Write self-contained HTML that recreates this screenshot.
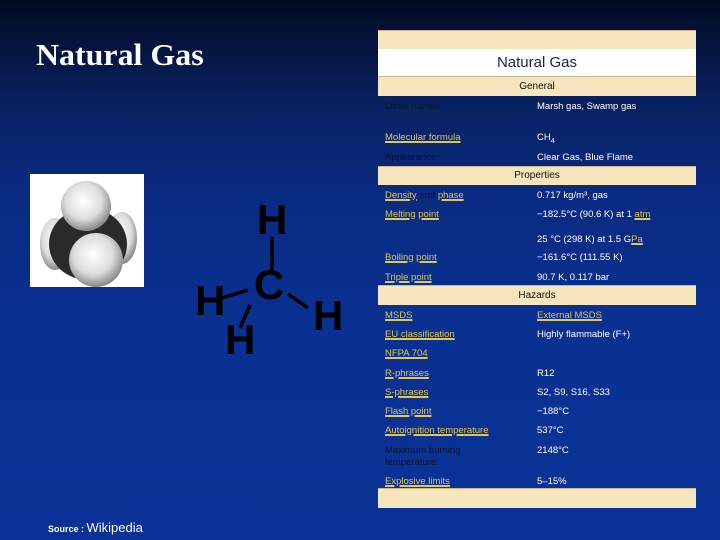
<!DOCTYPE html>
<html><head><meta charset="utf-8"><style>
*{margin:0;padding:0}
body{width:720px;height:540px;overflow:hidden;position:relative;font-family:"Liberation Sans",sans-serif;
background:linear-gradient(180deg,#020a22 0%,#08205e 18%,#0a2a80 35%,#0a3092 60%,#0a3296 100%);}
.a{position:absolute;white-space:nowrap}
.bar{position:absolute;left:378px;width:318px;background:#f7e6bd;border-top:1px solid #c8b890;font-size:10px;color:#111;text-align:center}
.l{position:absolute;left:385px;font-size:9.5px;color:#0a1430;white-space:nowrap;margin-top:3px}
.k{color:#e0c850;text-decoration:underline;text-decoration-color:#e0c850;text-decoration-thickness:2px}
.v{position:absolute;left:537px;font-size:9.5px;color:#fff;white-space:nowrap;margin-top:3px}
.h{position:absolute;font-size:42px;color:#000;font-family:"Liberation Sans",sans-serif}
</style></head><body>
<div class="a" style="left:36px;top:37px;font:bold 31px 'Liberation Serif',serif;color:#fff;transform:scaleX(1.03);transform-origin:left">Natural Gas</div>
<div class="bar" style="top:30px;height:19px"></div>
<div class="a" style="left:378px;top:49px;width:318px;height:27px;background:#fff;text-align:center;font-size:15px;color:#1a2050;line-height:27px">Natural Gas</div>
<div class="bar" style="top:76px;height:19px;line-height:19px">General</div>
<div class="bar" style="top:166px;height:18px;line-height:18px">Properties</div>
<div class="bar" style="top:285px;height:19px;line-height:19px">Hazards</div>
<div class="bar" style="top:488px;height:19px"></div>

<div class="l" style="top:98px">Other names</div><div class="v" style="top:98px">Marsh gas, Swamp gas</div>
<div class="l" style="top:129px"><span class="k">Molecular formula</span></div><div class="v" style="top:129px">CH<sub style="font-size:7px">4</sub></div>
<div class="l" style="top:149px">Appearance</div><div class="v" style="top:149px">Clear Gas, Blue Flame</div>
<div class="l" style="top:187px"><span class="k">Density</span> and <span class="k">phase</span></div><div class="v" style="top:187px">0.717 kg/m³, gas</div>
<div class="l" style="top:206px"><span class="k">Melting point</span></div><div class="v" style="top:206px">−182.5°C (90.6 K) at 1 <span class="k">atm</span></div>
<div class="v" style="top:231px">25 °C (298 K) at 1.5 G<span class="k">Pa</span></div>
<div class="l" style="top:249px"><span class="k">Boiling point</span></div><div class="v" style="top:249px">−161.6°C (111.55 K)</div>
<div class="l" style="top:269px"><span class="k">Triple point</span></div><div class="v" style="top:269px">90.7 K, 0.117 bar</div>
<div class="l" style="top:307px"><span class="k">MSDS</span></div><div class="v" style="top:307px"><span class="k">External MSDS</span></div>
<div class="l" style="top:326px"><span class="k">EU classification</span></div><div class="v" style="top:326px">Highly flammable (F+)</div>
<div class="l" style="top:345px"><span class="k">NFPA 704</span></div>
<div class="l" style="top:365px"><span class="k">R-phrases</span></div><div class="v" style="top:365px">R12</div>
<div class="l" style="top:384px"><span class="k">S-phrases</span></div><div class="v" style="top:384px">S2, S9, S16, S33</div>
<div class="l" style="top:403px"><span class="k">Flash point</span></div><div class="v" style="top:403px">−188°C</div>
<div class="l" style="top:422px"><span class="k">Autoignition temperature</span></div><div class="v" style="top:422px">537°C</div>
<div class="l" style="top:442px;line-height:12px">Maximum burning<br>temperature:</div><div class="v" style="top:442px">2148°C</div>
<div class="l" style="top:473px"><span class="k">Explosive limits</span></div><div class="v" style="top:473px">5–15%</div>

<div class="a" style="left:30px;top:174px;width:114px;height:113px;background:#fff;overflow:hidden">
<svg width="114" height="113" viewBox="0 0 114 113">
<defs><radialGradient id="w" cx="45%" cy="40%" r="60%"><stop offset="0" stop-color="#fff"/><stop offset="0.6" stop-color="#ddd"/><stop offset="1" stop-color="#888"/></radialGradient></defs>
<ellipse cx="25" cy="70" rx="15" ry="26" fill="url(#w)"/><ellipse cx="92" cy="64" rx="15" ry="26" fill="url(#w)"/>
<ellipse cx="58" cy="70" rx="39" ry="36" fill="#2a2a2a"/>
<ellipse cx="56" cy="32" rx="25" ry="25" fill="url(#w)"/>
<ellipse cx="66" cy="86" rx="27" ry="27" fill="url(#w)"/>
</svg></div>
<svg class="a" style="left:190px;top:195px" width="160" height="165">
<g stroke="#000" stroke-width="3.5"><line x1="82" y1="42" x2="82" y2="75"/><line x1="32" y1="103" x2="58" y2="95"/><line x1="60" y1="110" x2="50" y2="133"/><line x1="98" y1="99" x2="118" y2="113"/></g></svg>
<div class="h" style="left:257px;top:196px;font-weight:bold">H</div>
<div class="h" style="left:254px;top:261px;font-weight:bold">C</div>
<div class="h" style="left:195px;top:277px;font-weight:bold">H</div>
<div class="h" style="left:313px;top:292px;font-weight:bold">H</div>
<div class="h" style="left:225px;top:316px;font-weight:bold">H</div>
<div class="a" style="left:48px;top:520px;color:#fff;font-size:9px;font-weight:bold">Source : <span style="font-size:13px;font-weight:normal">Wikipedia</span></div>
</body></html>
